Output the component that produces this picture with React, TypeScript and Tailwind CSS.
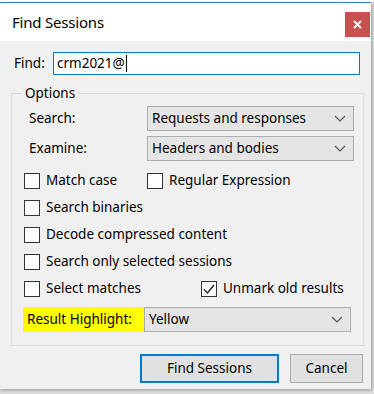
import React from 'react';

const font = "font-['Segoe_UI','Noto_Sans',sans-serif]";

const Chevron = () => (
  <svg width="12" height="7" viewBox="0 0 12 7" className="shrink-0">
    <path d="M1 1 L6 6 L11 1" fill="none" stroke="#555" strokeWidth="1.2" />
  </svg>
);

const Select = ({ value, className = '' }: { value: string; className?: string }) => (
  <div
    className={`flex items-center justify-between h-[25px] bg-[#e5e5e5] border border-[#adadad] pl-[4px] pr-[7px] text-[13.5px] text-black ${className}`}
  >
    <span>{value}</span>
    <Chevron />
  </div>
);

const Check = ({ label, checked = false }: { label: string; checked?: boolean }) => (
  <div className="flex items-center gap-[6px] h-[16px]">
    <div className="w-[16px] h-[16px] border border-[#333] bg-white flex items-center justify-center shrink-0">
      {checked && (
        <svg width="14" height="14" viewBox="0 0 14 14">
          <path d="M2 7.5 L5.5 11 L12 3" fill="none" stroke="#222" strokeWidth="1.4" />
        </svg>
      )}
    </div>
    <span className="text-[13.5px] text-black leading-none whitespace-nowrap">{label}</span>
  </div>
);

export default function App() {
  return (
    <div className={`w-[374px] h-[394px] bg-[#dcdcdc] overflow-hidden ${font}`}>
      <div className="h-[2px] bg-white" />
      <div className="w-[371px] h-[387px] flex flex-col border-t border-[#2b88d8] shadow-[1px_1px_3px_rgba(0,0,0,0.3)]">
        {/* title bar */}
        <div className="h-[38px] bg-white flex items-center justify-between pl-[12px] pr-[1px]">
          <span className="text-[15px] tracking-[-0.2px] text-black">Find Sessions</span>
          <div className="w-[25px] h-[25px] mt-[5px] bg-[#c75050] flex items-center justify-center">
            <svg width="9" height="9" viewBox="0 0 9 9">
              <path d="M1 1 L8 8 M8 1 L1 8" stroke="#fff" strokeWidth="1.8" />
            </svg>
          </div>
        </div>

        {/* body */}
        <div className="flex-1 bg-[#f0f0f0] pt-[11px]">
          <div className="flex items-center pl-[14px] gap-[6px]">
            <span className="text-[13.5px] text-black w-[33px]">Find:</span>
            <div className="w-[307px] h-[23px] border border-[#0078d7] bg-white flex items-center pl-[3px] text-[13.5px] text-black">
              crm2021@<span className="w-px h-[17px] bg-black ml-px" />
            </div>
          </div>

          <fieldset className="ml-[11px] mt-[9px] w-[352px] h-[262px] border border-[#d9d9d9] pl-[10px] pr-[9px]">
            <legend className="px-[3px] text-[13.5px] text-black leading-[18px]">Options</legend>

            <div className="flex flex-col gap-[5px] mt-[4px]">
              <div className="flex items-center">
                <span className="pl-[7px] w-[125px] text-[13.5px] text-black">Search:</span>
                <Select value="Requests and responses" className="w-[207px]" />
              </div>
              <div className="flex items-center">
                <span className="pl-[7px] w-[125px] text-[13.5px] text-black">Examine:</span>
                <Select value="Headers and bodies" className="w-[207px]" />
              </div>
            </div>

            <div className="flex flex-col gap-[11px] mt-[12px] pl-[2px]">
              <div className="flex items-center">
                <div className="w-[123px]">
                  <Check label="Match case" />
                </div>
                <Check label="Regular Expression" />
              </div>
              <Check label="Search binaries" />
              <Check label="Decode compressed content" />
              <Check label="Search only selected sessions" />
              <div className="flex items-center">
                <div className="w-[177px]">
                  <Check label="Select matches" />
                </div>
                <Check label="Unmark old results" checked />
              </div>
            </div>

            <div className="flex items-center mt-[10px] pl-[1px]">
              <div className="w-[121px] h-[25px] bg-[#ffff00] flex items-center pl-[4px] text-[13.5px] text-black">
                Result Highlight:
              </div>
              <Select value="Yellow" className="w-[207px]" />
            </div>
          </fieldset>

          <div className="flex justify-end gap-[11px] mt-[8px] pr-[8px]">
            <div className="w-[139px] h-[29px] bg-[#e1e1e1] border-2 border-[#0078d7] flex items-center justify-center text-[13.5px] text-black">
              Find Sessions
            </div>
            <div className="w-[73px] h-[29px] bg-[#e1e1e1] border border-[#adadad] flex items-center justify-center text-[13.5px] text-black">
              Cancel
            </div>
          </div>
        </div>
      </div>
    </div>
  );
}
